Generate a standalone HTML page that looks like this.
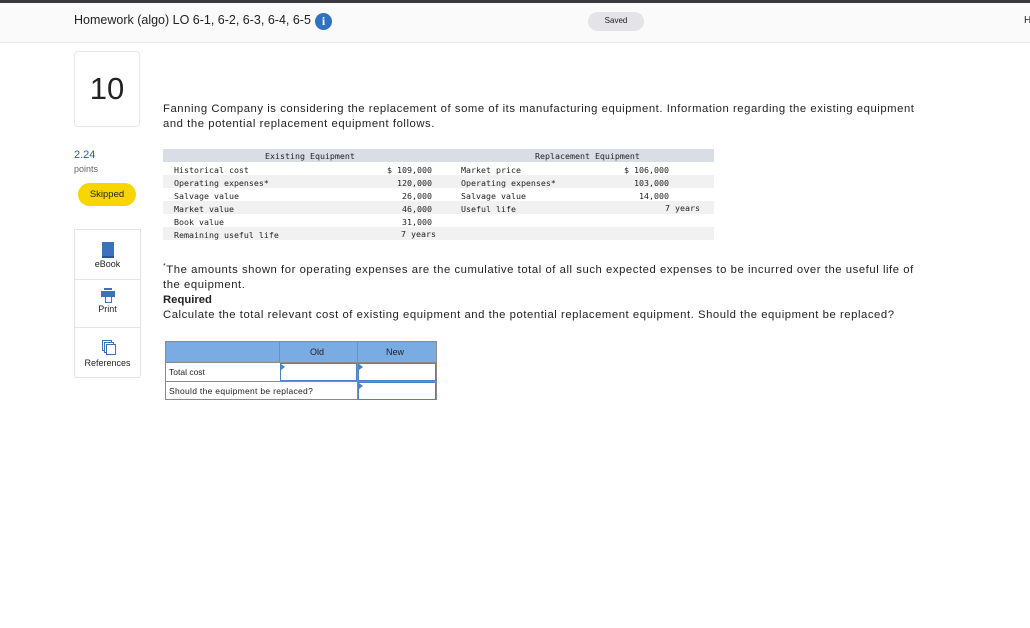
<!DOCTYPE html>
<html><head><style>
body{margin:0;width:1030px;height:628px;background:#fff;font-family:"Liberation Sans",sans-serif;color:#222;position:relative;overflow:hidden}
.top{position:absolute;left:0;top:0;width:1030px;height:3px;background:#3a3a3e}
.hdr{position:absolute;left:0;top:3px;width:1030px;height:39px;background:#fafafa;border-bottom:1px solid #e8e8e8}
.abs{position:absolute}
.mono{font-family:"DejaVu Sans Mono","Liberation Mono",monospace;font-size:8.3px;color:#222}
.row{position:absolute;left:163px;width:551px;height:13px}
.g{background:#f1f1f1}
.side{position:absolute;left:74px;width:65px;border:1px solid #e4e4e4;text-align:center;font-size:9px}
.txt{font-size:11.3px;line-height:15px;white-space:nowrap;letter-spacing:0.55px}
</style></head><body>
<div class="top"></div>
<div class="hdr"></div>
<div class="abs" style="left:74px;top:13px;font-size:12.5px;color:#222">Homework (algo) LO 6-1, 6-2, 6-3, 6-4, 6-5</div>
<div class="abs" style="left:315px;top:13px;width:17px;height:17px;border-radius:50%;background:#2f73c0;color:#fff;font-weight:bold;font-size:12px;text-align:center;line-height:17px;font-family:'Liberation Serif',serif">i</div>
<div class="abs" style="left:588px;top:12px;width:56px;height:19px;border-radius:10px;background:#e4e3e8;font-size:8px;text-align:center;line-height:18px">Saved</div>
<div class="abs" style="left:1024px;top:15px;font-size:10px">H</div>

<div class="abs" style="left:74px;top:51px;width:64px;height:74px;border:1px solid #e8e8e8;border-radius:4px;font-size:31px;text-align:center;line-height:74px;color:#222">10</div>
<div class="abs" style="left:74px;top:149px;font-size:11px;color:#2a5a9a">2.24</div>
<div class="abs" style="left:74px;top:164px;font-size:9px;color:#666">points</div>
<div class="abs" style="left:78px;top:183px;width:58px;height:23px;border-radius:12px;background:#f7d600;font-size:9.5px;text-align:center;line-height:23px">Skipped</div>

<div class="side" style="top:229px;height:49px">
<div style="margin:12px auto 0;width:12px;height:14px;background:#3a72be;border-bottom:2px solid #2a5594"></div><div style="margin-top:1px">eBook</div></div>
<div class="side" style="top:278px;height:49px;border-top:none">
<div style="margin:13px auto 0;width:14px;height:10px;position:relative"><div style="position:absolute;left:3px;top:-3px;width:8px;height:2px;background:#3a72be"></div><div style="width:14px;height:6px;background:#3a72be"></div><div style="position:absolute;left:4px;top:5px;width:5px;height:5px;border:1px solid #3a72be;background:#fff"></div></div><div style="margin-top:3px">Print</div></div>
<div class="side" style="top:327px;height:50px;border-top:none;border-radius:0 0 3px 3px">
<div style="margin:13px auto 0;width:14px;height:14px;position:relative"><div style="position:absolute;left:1px;top:0;width:8px;height:9px;border:1px solid #3a72be"></div><div style="position:absolute;left:3px;top:2px;width:8px;height:9px;border:1px solid #3a72be;background:#fff"></div><div style="position:absolute;left:5px;top:4px;width:8px;height:9px;border:1px solid #3a72be;background:#fff"></div></div><div style="margin-top:4px">References</div></div>

<div class="abs txt" style="left:163px;top:102px">Fanning Company is considering the replacement of some of its manufacturing equipment. Information regarding the existing equipment<br>and the potential replacement equipment follows.</div>

<div class="row" style="top:149px;background:#d9dde6"></div>
<div class="row g" style="top:175px"></div>
<div class="row g" style="top:201px"></div>
<div class="row g" style="top:227px"></div>
<div class="abs mono" style="left:265px;top:151px">Existing Equipment</div>
<div class="abs mono" style="left:535px;top:151px">Replacement Equipment</div>
<div class="abs mono" style="left:174px;top:164px;line-height:13px">Historical cost<br>Operating expenses*<br>Salvage value<br>Market value<br>Book value<br>Remaining useful life</div>
<div class="abs mono" style="left:330px;width:102px;text-align:right;top:164px;line-height:13px">$ 109,000<br>120,000<br>26,000<br>46,000<br>31,000<br>&nbsp;</div>
<div class="abs mono" style="left:401px;top:229px">7 years</div>
<div class="abs mono" style="left:461px;top:164px;line-height:13px">Market price<br>Operating expenses*<br>Salvage value<br>Useful life</div>
<div class="abs mono" style="left:570px;width:99px;text-align:right;top:164px;line-height:13px">$ 106,000<br>103,000<br>14,000</div>
<div class="abs mono" style="left:665px;top:203px">7 years</div>

<div class="abs txt" style="left:163px;top:259px"><sup style="font-size:7px">*</sup>The amounts shown for operating expenses are the cumulative total of all such expected expenses to be incurred over the useful life of<br>the equipment.<br><b style="letter-spacing:0">Required</b><br>Calculate the total relevant cost of existing equipment and the potential replacement equipment. Should the equipment be replaced?</div>

<div class="abs" style="left:165px;top:341px;width:272px;height:59px;border:1px solid #8a8a8a;box-sizing:border-box"></div>
<div class="abs" style="left:166px;top:342px;width:270px;height:20px;background:#7aabe3"></div>
<div class="abs" style="left:279px;top:341px;width:1px;height:21px;background:#8a8a8a"></div>
<div class="abs" style="left:357px;top:341px;width:1px;height:59px;background:#8a8a8a"></div>
<div class="abs" style="left:165px;top:362px;width:272px;height:1px;background:#8a8a8a"></div>
<div class="abs" style="left:165px;top:381px;width:272px;height:1px;background:#8a8a8a"></div>
<div class="abs" style="left:310px;top:347px;font-size:9px">Old</div>
<div class="abs" style="left:386px;top:347px;font-size:9px">New</div>
<div class="abs" style="left:169px;top:367px;font-size:8.5px">Total cost</div>
<div class="abs" style="left:169px;top:386px;font-size:8.5px;letter-spacing:.3px">Should the equipment be replaced?</div>
<div class="abs" style="left:280px;top:363px;width:77px;height:18px;border:1px solid #4a82c4;box-sizing:border-box;background:#fff"></div>
<div class="abs" style="left:358px;top:363px;width:78px;height:18px;border:1px solid #4a82c4;box-sizing:border-box;background:#fff"></div>
<div class="abs" style="left:358px;top:382px;width:78px;height:18px;border:1px solid #4a82c4;box-sizing:border-box;background:#fff"></div>
<div class="abs" style="left:281px;top:364px;width:0;height:0;border-top:3px solid transparent;border-bottom:3px solid transparent;border-left:4px solid #4a82c4"></div>
<div class="abs" style="left:359px;top:364px;width:0;height:0;border-top:3px solid transparent;border-bottom:3px solid transparent;border-left:4px solid #4a82c4"></div>
<div class="abs" style="left:359px;top:383px;width:0;height:0;border-top:3px solid transparent;border-bottom:3px solid transparent;border-left:4px solid #4a82c4"></div>
</body></html>
